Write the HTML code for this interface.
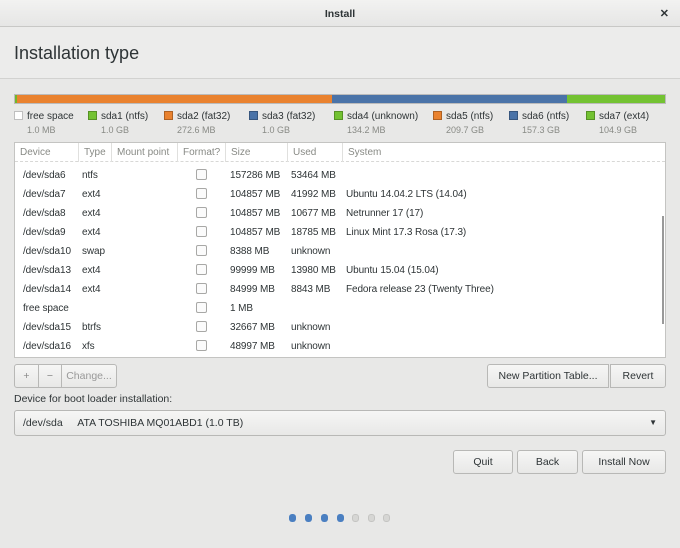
<!DOCTYPE html>
<html><head><style>
*{box-sizing:border-box;margin:0;padding:0}
body{width:680px;height:548px;background:#e8e8e7;font-family:"Liberation Sans",sans-serif;font-size:10.5px;color:#2e3436;position:relative;overflow:hidden}
.abs{position:absolute;white-space:nowrap}
.tb{position:absolute;left:0;top:0;width:680px;height:27px;background:linear-gradient(#f2f2f1,#e6e6e5);border-bottom:1px solid #c8c8c6;text-align:center;line-height:28px;font-weight:bold;font-size:10.5px;color:#2e3436}
.hdr{position:absolute;left:0;top:27px;width:680px;height:52px;border-bottom:1px solid #d2d2d0;background:#ececeb}
.leg{position:absolute;top:111px;font-size:10px}
.leg .sq{display:inline-block;width:9px;height:9px;margin-right:4px;vertical-align:-1px;border:1px solid rgba(0,0,0,.25)}
.leg .sz{position:absolute;top:14px;font-size:9px;color:#888a85}
.tbl{position:absolute;left:14px;top:142px;width:652px;height:216px;background:#fff;border:1px solid #c4c4c2}
.th{position:absolute;top:0;height:19px;line-height:19px;color:#888a85;font-size:10px;border-right:1px solid #e0e0de;padding-left:5px}
.row{position:absolute;left:0;width:640px;height:19px;line-height:19px;font-size:10px;letter-spacing:-0.1px}
.row span{position:absolute}
.cb{width:11px;height:11px;border:1px solid #a8a8a6;border-radius:2px;top:3px;background:#fbfbfb}
.btn{position:absolute;height:24px;line-height:22px;border:1px solid #b8b8b6;border-radius:3px;background:linear-gradient(#f6f6f5,#e8e8e7);text-align:center;font-size:10.5px;color:#2e3436}
.dot{position:absolute;top:514px;width:7px;height:8px;border-radius:3px}
</style></head><body>
<div class="tb">Install<span style="position:absolute;right:11px;top:0;font-size:11px">✕</span></div>
<div class="hdr"><div class="abs" style="left:14px;top:16px;font-size:18px;color:#2e3436">Installation type</div></div>
<div class="abs" style="left:14px;top:94px;width:652px;height:10px;background:#e6e6e4;border:1px solid #bbb"></div>
<div class="abs" style="left:15px;top:95px;width:2px;height:8px;background:#73b72a"></div>
<div class="abs" style="left:17px;top:95px;width:315px;height:8px;background:#e9822f"></div>
<div class="abs" style="left:332px;top:95px;width:235px;height:8px;background:#4a73a8"></div>
<div class="abs" style="left:567px;top:95px;width:98px;height:8px;background:#73c232"></div>
<div class="leg" style="left:14px"><span class="sq" style="background:#fff"></span>free space<span class="sz" style="left:13px">1.0 MB</span></div>
<div class="leg" style="left:88px"><span class="sq" style="background:#73c232"></span>sda1 (ntfs)<span class="sz" style="left:13px">1.0 GB</span></div>
<div class="leg" style="left:164px"><span class="sq" style="background:#e9822f"></span>sda2 (fat32)<span class="sz" style="left:13px">272.6 MB</span></div>
<div class="leg" style="left:249px"><span class="sq" style="background:#4a73a8"></span>sda3 (fat32)<span class="sz" style="left:13px">1.0 GB</span></div>
<div class="leg" style="left:334px"><span class="sq" style="background:#73c232"></span>sda4 (unknown)<span class="sz" style="left:13px">134.2 MB</span></div>
<div class="leg" style="left:433px"><span class="sq" style="background:#e9822f"></span>sda5 (ntfs)<span class="sz" style="left:13px">209.7 GB</span></div>
<div class="leg" style="left:509px"><span class="sq" style="background:#4a73a8"></span>sda6 (ntfs)<span class="sz" style="left:13px">157.3 GB</span></div>
<div class="leg" style="left:586px"><span class="sq" style="background:#73c232"></span>sda7 (ext4)<span class="sz" style="left:13px">104.9 GB</span></div>
<div class="tbl">
<div style="position:absolute;left:0;top:0;width:650px;height:19px;border-bottom:1px dashed #d8d8d6"></div>
<div class="th" style="left:0;width:64px">Device</div>
<div class="th" style="left:64px;width:33px">Type</div>
<div class="th" style="left:97px;width:66px">Mount point</div>
<div class="th" style="left:163px;width:48px">Format?</div>
<div class="th" style="left:211px;width:62px">Size</div>
<div class="th" style="left:273px;width:55px">Used</div>
<div class="th" style="left:328px;width:322px;border-right:none">System</div>
<div style="position:absolute;left:647px;top:73px;width:2px;height:108px;background:#999"></div>
<div class="row" style="top:23px"><span style="left:8px">/dev/sda6</span><span style="left:67px">ntfs</span><span class="cb" style="left:181px"></span><span style="left:215px">157286 MB</span><span style="left:276px">53464 MB</span></div>
<div class="row" style="top:42px"><span style="left:8px">/dev/sda7</span><span style="left:67px">ext4</span><span class="cb" style="left:181px"></span><span style="left:215px">104857 MB</span><span style="left:276px">41992 MB</span><span style="left:331px">Ubuntu 14.04.2 LTS (14.04)</span></div>
<div class="row" style="top:61px"><span style="left:8px">/dev/sda8</span><span style="left:67px">ext4</span><span class="cb" style="left:181px"></span><span style="left:215px">104857 MB</span><span style="left:276px">10677 MB</span><span style="left:331px">Netrunner 17 (17)</span></div>
<div class="row" style="top:80px"><span style="left:8px">/dev/sda9</span><span style="left:67px">ext4</span><span class="cb" style="left:181px"></span><span style="left:215px">104857 MB</span><span style="left:276px">18785 MB</span><span style="left:331px">Linux Mint 17.3 Rosa (17.3)</span></div>
<div class="row" style="top:99px"><span style="left:8px">/dev/sda10</span><span style="left:67px">swap</span><span class="cb" style="left:181px"></span><span style="left:215px">8388 MB</span><span style="left:276px">unknown</span></div>
<div class="row" style="top:118px"><span style="left:8px">/dev/sda13</span><span style="left:67px">ext4</span><span class="cb" style="left:181px"></span><span style="left:215px">99999 MB</span><span style="left:276px">13980 MB</span><span style="left:331px">Ubuntu 15.04 (15.04)</span></div>
<div class="row" style="top:137px"><span style="left:8px">/dev/sda14</span><span style="left:67px">ext4</span><span class="cb" style="left:181px"></span><span style="left:215px">84999 MB</span><span style="left:276px">8843 MB</span><span style="left:331px">Fedora release 23 (Twenty Three)</span></div>
<div class="row" style="top:156px"><span style="left:8px">free space</span><span class="cb" style="left:181px"></span><span style="left:215px">1 MB</span></div>
<div class="row" style="top:175px"><span style="left:8px">/dev/sda15</span><span style="left:67px">btrfs</span><span class="cb" style="left:181px"></span><span style="left:215px">32667 MB</span><span style="left:276px">unknown</span></div>
<div class="row" style="top:194px"><span style="left:8px">/dev/sda16</span><span style="left:67px">xfs</span><span class="cb" style="left:181px"></span><span style="left:215px">48997 MB</span><span style="left:276px">unknown</span></div>
</div>
<div class="btn" style="left:14px;top:364px;width:25px;color:#888;border-radius:3px 0 0 3px">+</div>
<div class="btn" style="left:38px;top:364px;width:24px;color:#888;border-radius:0">−</div>
<div class="btn" style="left:61px;top:364px;width:56px;color:#999;border-radius:0 3px 3px 0">Change...</div>
<div class="btn" style="left:487px;top:364px;width:122px;border-radius:3px 0 0 3px">New Partition Table...</div>
<div class="btn" style="left:610px;top:364px;width:56px;border-radius:0 3px 3px 0">Revert</div>
<div class="abs" style="left:14px;top:393px;font-size:10.5px">Device for boot loader installation:</div>
<div class="btn" style="left:14px;top:410px;width:652px;height:26px;line-height:24px;text-align:left;padding-left:8px">/dev/sda&nbsp;&nbsp;&nbsp;&nbsp;&nbsp;ATA TOSHIBA MQ01ABD1 (1.0 TB)<span style="position:absolute;right:8px;font-size:8px">▼</span></div>
<div class="btn" style="left:453px;top:450px;width:60px">Quit</div>
<div class="btn" style="left:517px;top:450px;width:61px">Back</div>
<div class="btn" style="left:582px;top:450px;width:84px">Install Now</div>
<div class="dot" style="left:289px;background:#4a7fc1"></div>
<div class="dot" style="left:305px;background:#4a7fc1"></div>
<div class="dot" style="left:321px;background:#4a7fc1"></div>
<div class="dot" style="left:337px;background:#4a7fc1"></div>
<div class="dot" style="left:352px;background:#d6d6d4;border:1px solid #c4c4c2"></div>
<div class="dot" style="left:368px;background:#d6d6d4;border:1px solid #c4c4c2"></div>
<div class="dot" style="left:383px;background:#d6d6d4;border:1px solid #c4c4c2"></div>
</body></html>
